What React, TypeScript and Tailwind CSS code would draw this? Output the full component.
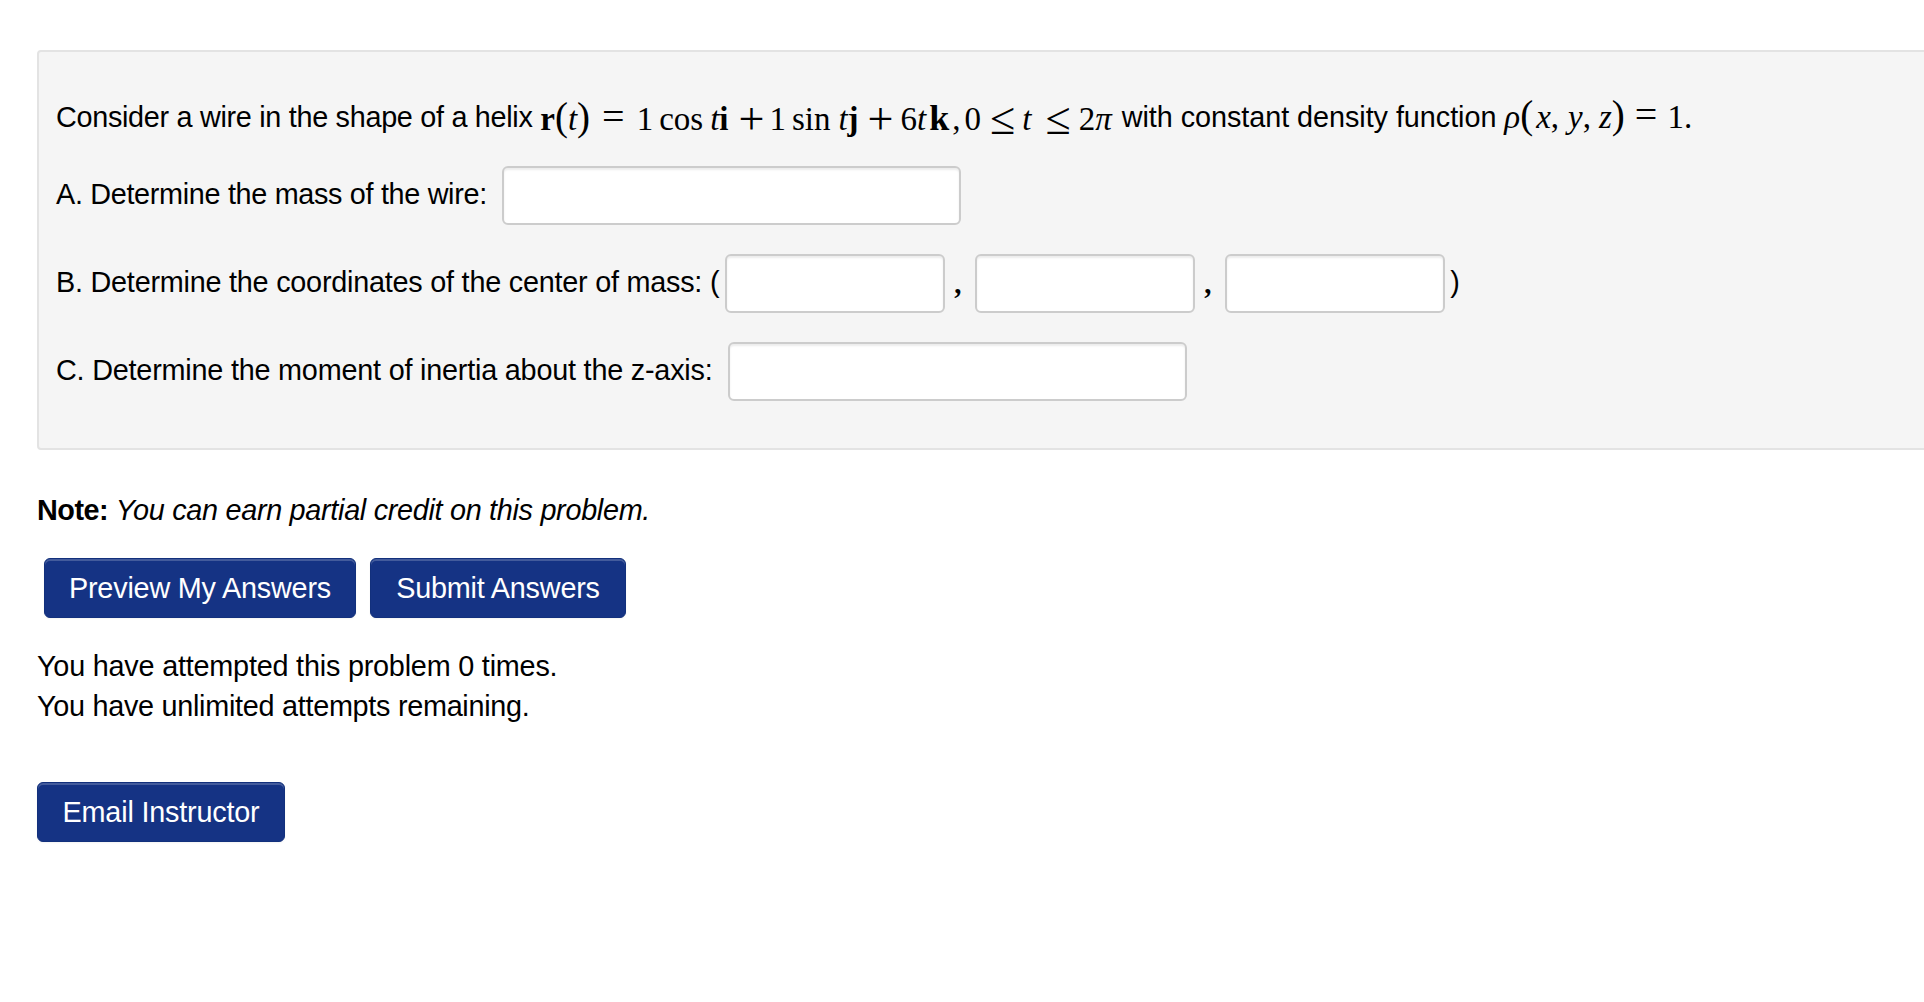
import React from 'react';

const AnswerBox = ({ width }: { width: string }) => (
  <input
    type="text"
    className={`${width} h-[59px] rounded-[6px] border-2 border-[#cccccc] bg-white shadow-[inset_0_2px_2px_rgba(0,0,0,0.075)] outline-none`}
  />
);

const Bold = ({ children, className = '' }: { children: React.ReactNode; className?: string }) => (
  <b className={`font-bold ${className}`}>{children}</b>
);
const It = ({ children }: { children: React.ReactNode }) => <i className="italic">{children}</i>;
// relation signs and brackets run larger than the letters in the typeset maths
const Sign = ({ children, className = '' }: { children: React.ReactNode; className?: string }) => (
  <span className={`inline-block text-[40px] leading-none ${className}`}>{children}</span>
);
const BigSign = ({ children, className = '' }: { children: React.ReactNode; className?: string }) => (
  <span className={`inline-block translate-y-[4px] text-[46px] leading-none ${className}`}>{children}</span>
);
const Paren = ({ children }: { children: React.ReactNode }) => (
  <span className="inline-block text-[39px] leading-none font-light">{children}</span>
);

const HelixMath = () => (
  <span className="font-['Liberation_Serif',serif] text-[33px] tracking-normal whitespace-pre">
    <Bold>r</Bold><Paren>(</Paren><It>t</It><Paren>)</Paren>
    <Sign className="mx-[12px]">=</Sign>1<span className="ml-[6px]">cos</span>
    <span className="ml-[7px]"><It>t</It><Bold>i</Bold></span>
    <BigSign className="ml-[10px] mr-[5px]">+</BigSign>1<span className="ml-[6px]">sin</span>
    <span className="ml-[8px]"><It>t</It><Bold>j</Bold></span>
    <BigSign className="ml-[9px] mr-[7px]">+</BigSign>6<It>t</It><Bold className="ml-[3px] text-[36px]">k</Bold>
    <span className="ml-[3px]">,</span><span className="ml-[4px]">0</span>
    <BigSign className="ml-[9px] mr-[7px]">≤</BigSign><It>t</It><BigSign className="ml-[14px] mr-[8px]">≤</BigSign>2<It>π</It>
    <span className="ml-[2px]" />
  </span>
);

const DensityMath = () => (
  <span className="font-['Liberation_Serif',serif] text-[33px] tracking-normal whitespace-pre">
    <It>ρ</It><Paren>(</Paren><span className="ml-[3px]"><It>x</It></span>,<span className="ml-[9px]"><It>y</It></span>,
    <span className="ml-[8px]"><It>z</It></span><Paren>)</Paren>
    <Sign className="mx-[10px]">=</Sign>1.
  </span>
);

const PrimaryButton = ({ label, width }: { label: string; width: string }) => (
  <button
    type="button"
    className={`${width} h-[60px] rounded-[6px] border border-[#12307c] bg-[#153384] pt-[1px] tracking-[-0.2px] text-white shadow-[inset_0_2px_0_rgba(255,255,255,0.2),0_1px_2px_rgba(0,0,0,0.05)]`}
  >
    {label}
  </button>
);

export default function App() {
  return (
    <div className="h-[1002px] w-[1924px] overflow-hidden bg-white pl-[37px] pt-[50px] font-['Liberation_Sans',Arial,sans-serif] text-[28.8px] text-[#000]">
      {/* Problem panel */}
      <div className="h-[400px] w-[1950px] rounded-[4px] border-2 border-[#e3e3e3] bg-[#f5f5f5] pl-[17px] pt-[46px]">
        <div className="flex h-[40px] items-center whitespace-pre tracking-[-0.3px]">
          Consider a wire in the shape of a helix <HelixMath /><span className="tracking-[-0.05px]"> with constant density function </span><DensityMath />
        </div>
        <div className="mt-[28px] flex items-center whitespace-pre tracking-[-0.32px]">
          <span className="-translate-y-[1px]">A. Determine the mass of the wire:</span>
          <span className="ml-[15px]"><AnswerBox width="w-[459px]" /></span>
        </div>
        <div className="mt-[29px] flex items-center whitespace-pre tracking-[-0.23px]">
          <span className="-translate-y-[1px]">B. Determine the coordinates of the center of mass: (</span>
          <span className="ml-[6px]"><AnswerBox width="w-[220px]" /></span>
          <span className="ml-[9px] mr-[14px] font-['Liberation_Serif',serif] font-bold">,</span>
          <AnswerBox width="w-[220px]" />
          <span className="ml-[9px] mr-[14px] font-['Liberation_Serif',serif] font-bold">,</span>
          <AnswerBox width="w-[220px]" />
          <span className="ml-[5px] -translate-y-[1px]">)</span>
        </div>
        <div className="mt-[29px] flex items-center whitespace-pre tracking-[-0.21px]">
          <span className="-translate-y-[1px]">C. Determine the moment of inertia about the z-axis:</span>
          <span className="ml-[15px]"><AnswerBox width="w-[459px]" /></span>
        </div>
      </div>

      <p className="mt-[40px] h-[40px] leading-[40px] tracking-[-0.3px]">
        <span className="font-bold tracking-[-0.5px]">Note:</span> <em>You can earn partial credit on this problem.</em>
      </p>

      <div className="mt-[28px] flex gap-[14px] pl-[7px]">
        <PrimaryButton label="Preview My Answers" width="w-[312px]" />
        <PrimaryButton label="Submit Answers" width="w-[256px]" />
      </div>

      <div className="mt-[28px] leading-[40px] tracking-[-0.21px]">
        <p>You have attempted this problem 0 times.</p>
        <p className="tracking-[-0.28px]">You have unlimited attempts remaining.</p>
      </div>

      <div className="mt-[56px]">
        <PrimaryButton label="Email Instructor" width="w-[248px]" />
      </div>
    </div>
  );
}
